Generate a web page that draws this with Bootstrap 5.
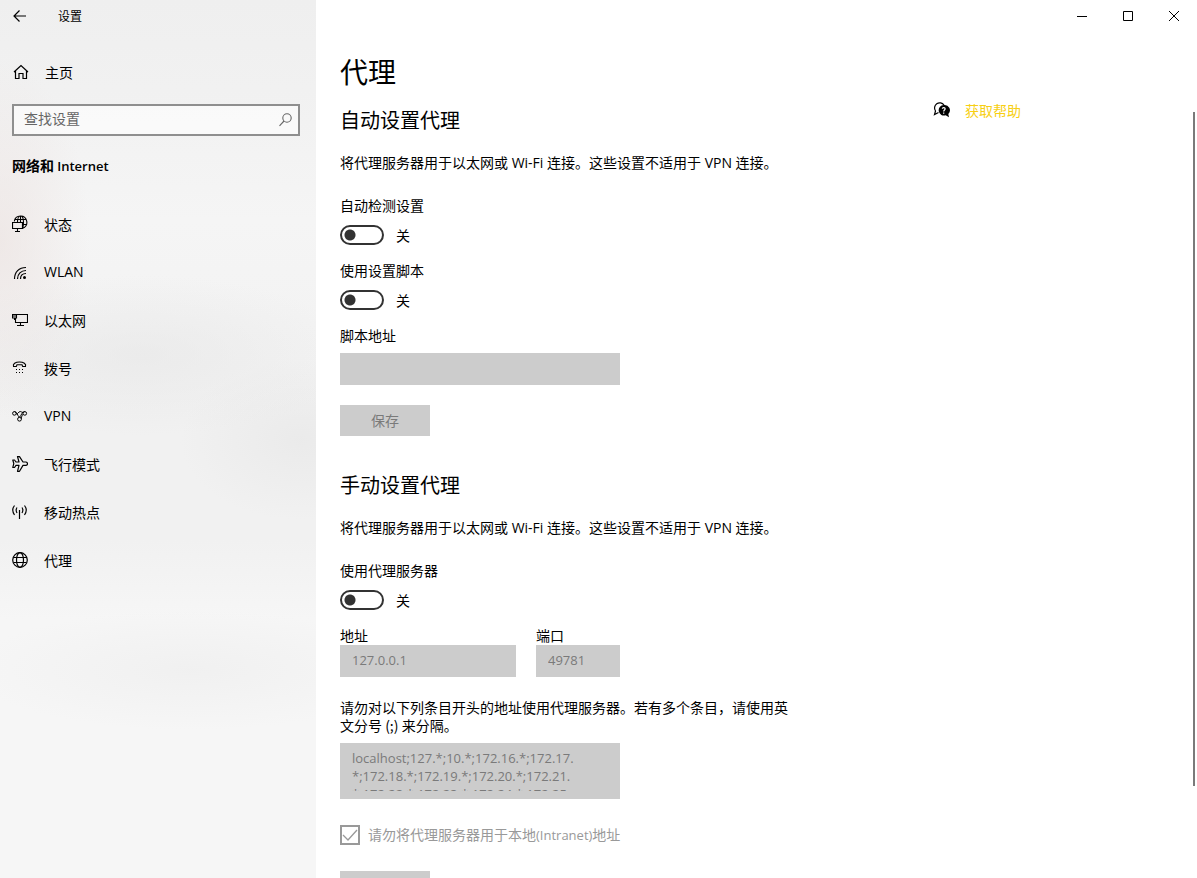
<!DOCTYPE html>
<html lang="zh-CN">
<head>
<meta charset="utf-8">
<meta name="viewport" content="width=device-width, initial-scale=1">
<title>设置</title>
<link href="https://cdn.jsdelivr.net/npm/bootstrap@5.3.0/dist/css/bootstrap.min.css" rel="stylesheet">
<style>
  body { font-family: "Noto Sans CJK SC", sans-serif; font-size: 14px; line-height: 20px; color: #000; background: #fff; }
  .latin { font-family: "Open Sans", "Noto Sans CJK SC", sans-serif; }
  span.latin { line-height: 1; }
  svg { display: block; flex: none; fill: none; stroke: currentColor; }

  /* sidebar */
  .side {
    flex: 0 0 316px;
    background:
      radial-gradient(ellipse 90px 180px at 0 240px, rgba(236,227,225,.7), transparent),
      radial-gradient(ellipse 220px 80px at 140px 355px, rgba(230,230,230,.6), transparent),
      radial-gradient(ellipse 120px 80px at 300px 440px, rgba(230,230,230,.6), transparent),
      radial-gradient(ellipse 220px 60px at 190px 670px, rgba(238,238,238,.7), transparent),
      linear-gradient(#efefef, #f1f1f1 90px, #f5f5f5 220px, #f1f1f1 420px, #f1f1f1 540px, #f6f6f6 620px, #f6f6f6);
  }
  .titlebar { height: 32px; }
  .app-name { font-size: 12px; margin-left: 18px; }
  .back { width: 40px; height: 32px; }
  .plain { border: 0; padding: 0; background: none; color: inherit; display: flex; align-items: center; justify-content: center; }
  .home-link { height: 48px; margin-top: 16px; }
  .home-link, .side-link { display: flex; align-items: center; gap: 16px; padding-left: 12px; color: #000; text-decoration: none; }
  .side-link { height: 48px; }
  .side-link:hover, .home-link:hover { background: rgba(0,0,0,.06); }
  .search { margin: 8px 16px 0 12px; padding-right: 6px; height: 32px; border: 2px solid #8f8f8f; background: rgba(255,255,255,.6); }
  .search input { background: none; border: 0; padding: 0 0 4px 10px; outline: 0; min-width: 0; }
  .search input::placeholder { color: #666; }
  .search svg { color: #666; }
  .group-name { font-size: 14px; line-height: 20px; font-weight: 700; margin: 19px 0 25px 12px; }
  .group-name .latin { font-weight: 600; font-size: 13px; }

  /* main pane */
  .pane { min-width: 0; }
  .caption-btn { width: 46px; height: 32px; }
  .page-name { font-size: 28px; line-height: 40px; font-weight: 400; margin: 19px 0 9px; }
  .scroller { overflow-y: auto; min-height: 0; scrollbar-width: none; }
  .scroller::-webkit-scrollbar { display: none; }
  .settings { flex: 0 1 593px; padding-top: 6px; }
  .section-name { font-size: 20px; line-height: 28px; font-weight: 400; margin-bottom: 18px; }
  .manual { padding-top: 35px; }
  .intro { margin-bottom: 23px; }
  .field-name { display: block; }
  .switch { display: flex; align-items: center; gap: 12px; margin: 10px 0 15px; height: 20px; }
  .switch .form-check-input {
    width: 44px; height: 20px; margin: 0; border: 2px solid #333; border-radius: 10px; box-shadow: none;
    background: radial-gradient(circle at 8px 8px, #333 5px, transparent 6px) #fff;
  }
  .switch .form-check-input:checked { background: radial-gradient(circle at 32px 8px, #333 5px, transparent 6px) #fff; }
  .box, .box:disabled { height: 32px; border: 0; border-radius: 0; background: #ccc; color: #7a7a7a; padding: 0 12px 2px; font-size: 13px; line-height: 18px; opacity: 1; }
  .w-full { width: 280px; }
  .w-addr { width: 176px; }
  .w-port { width: 84px; }
  .pair { gap: 20px; }
  .flat, .flat:disabled { width: 90px; height: 31px; margin-top: 20px; border: 0; border-radius: 0; background: #ccc; color: #7a7a7a; opacity: 1; padding: 0 0 2px; font-size: 14px; line-height: 20px; }
  .note { max-width: 452px; line-height: 18px; margin: 21px 0 9px; }
  textarea.box, textarea.box:disabled { display: block; height: 56px; min-height: 0; padding: 6px 12px 0; border-bottom: 8px solid #ccc; resize: none; white-space: pre; overflow: hidden; }
  .tick { display: flex; align-items: center; gap: 8px; margin-top: 26px; height: 20px; color: #999; }
  .tick label { padding-bottom: 2px; }
  .tick .latin { font-size: 13px; }
  .tick + .flat { margin-top: 26px; }
  .tick .form-check-input:disabled {
    width: 20px; height: 20px; margin: 0; border: 2px solid #999; border-radius: 0; opacity: 1; background-color: #fff;
    background-size: 16px 16px;
    background-image: url("data:image/svg+xml,%3Csvg xmlns='http://www.w3.org/2000/svg' viewBox='0 0 16 16'%3E%3Cpath d='M1 8l5 5 9-10' fill='none' stroke='%23999' stroke-width='1.3'/%3E%3C/svg%3E");
  }
  .help { height: 20px; gap: 15px; }
  .help a { color: #f7cf12; text-decoration: none; }
  .thumb { position: absolute; right: 2px; top: 12.8%; height: 76.7%; width: 2px; background: #7a7a7a; }
</style>
</head>
<body>
<div class="d-flex vh-100 overflow-hidden">

  <aside class="side">
    <div class="titlebar d-flex align-items-center">
      <button class="plain back" type="button" aria-label="返回">
        <svg width="14" height="14" viewBox="0 0 14 14" stroke-width="1.2"><path d="M1 7h12M6.500 1.500L1 7l5.500 5.500"/></svg>
      </button>
      <span class="app-name">设置</span>
    </div>

    <a class="home-link" href="#">
      <svg width="17" height="16" viewBox="0 0 17 16" stroke-width="1.2"><path d="M2 8L9 1.500 16 8M3.500 7v7.500h3.500V9.500h4v5h3.500V7"/></svg>
      <span>主页</span>
    </a>

    <div class="search d-flex align-items-center">
      <input class="flex-grow-1" type="search" placeholder="查找设置" aria-label="查找设置">
      <svg width="13" height="14" viewBox="0 0 13 14" stroke-width="1.100" aria-hidden="true"><circle cx="8" cy="5" r="4.200"/><path d="M5 8L.500 12.800"/></svg>
    </div>

    <h1 class="group-name">网络和 <span class="latin">Internet</span></h1>

    <nav>
      <a class="side-link" href="#">
        <svg width="16" height="18" viewBox="0 0 16 18" stroke-width="1.100"><path d="M2.300 6.300A6.300 6.300 0 1 1 10.700 13.200M5.500 7C5.500 3.500 6.800 1 8.500 1s3 2.500 3 6.300c0 2.500-.3 4.500-1 5.700M8.500 1v6M3 4.500h11M11 9.500h3.500"/><path d="M.500 7.500h10v6H.5z" stroke-width="1.200"/><path d="M5.500 13.500v3M3 16.500h5"/></svg>
        <span>状态</span></a>
      <a class="side-link" href="#">
        <svg width="16" height="16" viewBox="0 0 16 16" stroke-width="1.200"><path d="M2.500 15C2.500 8 7 3.500 14 3.500M5.500 15c0-5 3.500-8.500 8.500-8.500M8.500 15c0-3.500 2-5.500 5.500-5.500"/><circle cx="12.500" cy="13.500" r="1.500" fill="currentColor" stroke="none"/></svg>
        <span class="latin">WLAN</span></a>
      <a class="side-link" href="#">
        <svg width="16" height="16" viewBox="0 0 16 16" stroke-width="1.100"><path d="M4.500 2.500h11v8h-12V6M8.500 10.500v3M5 13.500h7M.500 2.500h4v3.500h-4zM.5 4h4M2.500 6v1.500h1"/></svg>
        <span>以太网</span></a>
      <a class="side-link" href="#">
        <svg width="16" height="16" viewBox="0 0 16 16" stroke-width="1.100"><path d="M1.500 6.500C.5 4 3.500 2 7.500 2s7 2 6 4.500H10.700L10 4.800H5L4.300 6.500z"/><path d="M4 9h1v1H4zM7 9h1v1H7zM10 9h1v1h-1zM4 12h1v1H4zM7 12h1v1H7zM10 12h1v1h-1z" stroke="none" fill="currentColor"/></svg>
        <span>拨号</span></a>
      <a class="side-link" href="#">
        <svg width="16" height="16" viewBox="0 0 16 16" stroke-width="1"><circle cx="2.400" cy="5.400" r="1.800"/><circle cx="12.800" cy="5.400" r="1.800"/><circle cx="7.500" cy="11.200" r="1.900"/><path d="M2.400 3.600c2.600 0 2.800 4 5.100 5.700M4.200 5.900C6 6.500 6.300 3.500 8.300 3.500c1.200 0 1.500 1 2.700 1M12.800 3.600c-2.800 0-3.300 3.500-5.300 5.700M11 6.200c-1 1.500-1.500 2-1.600 4.500"/></svg>
        <span class="latin">VPN</span></a>
      <a class="side-link" href="#">
        <svg width="16" height="16" viewBox="0 0 16 16" stroke-width="1.200" stroke-linejoin="round"><path d="M5.500.600h2L11 6h3q1.500.3 1.500 1.700T14 9.400h-3L7.500 15.300h-2L7 9.400H4L2.500 11.500H.800L1.800 7.700.8 4H2.500L4 6h3z"/></svg>
        <span>飞行模式</span></a>
      <a class="side-link" href="#">
        <svg width="16" height="16" viewBox="0 0 16 16" stroke-width="1.200"><path d="M7.500 6v9M5 3.500Q3.300 6 5 9M10 3.500Q11.700 6 10 9M2.500 1.500Q-1 6 2.500 11M12.500 1.500Q16 6 12.500 11"/></svg>
        <span>移动热点</span></a>
      <a class="side-link" href="#">
        <svg width="16" height="16" viewBox="0 0 16 16" stroke-width="1.200"><circle cx="8" cy="8" r="7.300"/><ellipse cx="8" cy="8" rx="3.500" ry="7.300"/><path d="M1.500 5.500h13M1.500 10.500h13"/></svg>
        <span>代理</span></a>
    </nav>
  </aside>

  <main class="pane flex-grow-1 d-flex flex-column position-relative">
    <div class="titlebar d-flex justify-content-end flex-shrink-0">
      <button class="plain caption-btn" type="button" aria-label="最小化"><svg width="10" height="10" viewBox="0 0 10 10"><path d="M0 5.500h10"/></svg></button>
      <button class="plain caption-btn" type="button" aria-label="最大化"><svg width="10" height="10" viewBox="0 0 10 10"><path d="M.500.500h9v9h-9z"/></svg></button>
      <button class="plain caption-btn" type="button" aria-label="关闭"><svg width="10" height="10" viewBox="0 0 10 10"><path d="M0 0l10 10M10 0L0 10"/></svg></button>
    </div>

    <h2 class="page-name ps-4">代理</h2>

    <div class="scroller flex-grow-1 d-flex ps-4">
      <div class="settings">
        <section>
          <h3 class="section-name">自动设置代理</h3>
          <p class="intro">将代理服务器用于以太网或<span class="latin"> Wi-Fi </span>连接。这些设置不适用于<span class="latin"> VPN </span>连接。</p>

          <label class="field-name" for="detect">自动检测设置</label>
          <div class="switch"><input class="form-check-input" type="checkbox" role="switch" id="detect"><span>关</span></div>

          <label class="field-name" for="script">使用设置脚本</label>
          <div class="switch"><input class="form-check-input" type="checkbox" role="switch" id="script"><span>关</span></div>

          <label class="field-name" for="script-url">脚本地址</label>
          <input class="form-control box latin w-full mt-2" type="text" id="script-url" disabled>
          <button class="btn flat d-block" type="button" disabled>保存</button>
        </section>

        <section class="manual">
          <h3 class="section-name">手动设置代理</h3>
          <p class="intro">将代理服务器用于以太网或<span class="latin"> Wi-Fi </span>连接。这些设置不适用于<span class="latin"> VPN </span>连接。</p>

          <label class="field-name" for="proxy">使用代理服务器</label>
          <div class="switch"><input class="form-check-input" type="checkbox" role="switch" id="proxy"><span>关</span></div>

          <div class="pair d-flex">
            <div><label class="field-name" for="addr">地址</label><input class="form-control box latin w-addr" type="text" id="addr" value="127.0.0.1" disabled></div>
            <div><label class="field-name" for="port">端口</label><input class="form-control box latin w-port" type="text" id="port" value="49781" disabled></div>
          </div>

          <label class="note d-block" for="bypass">请勿对以下列条目开头的地址使用代理服务器。若有多个条目，请使用英文分号 (;) 来分隔。</label>
          <textarea class="form-control box latin w-full" id="bypass" disabled>localhost;127.*;10.*;172.16.*;172.17.
*;172.18.*;172.19.*;172.20.*;172.21.
*;172.22.*;172.23.*;172.24.*;172.25.</textarea>

          <div class="tick">
            <input class="form-check-input" type="checkbox" id="local" checked disabled>
            <label for="local">请勿将代理服务器用于本地<span class="latin">(Intranet)</span>地址</label>
          </div>
          <button class="btn flat d-block" type="button" disabled>保存</button>
        </section>
      </div>

      <div class="help d-flex align-items-center">
        <svg width="17" height="18" viewBox="0 0 17 18" stroke-width="1.200"><path d="M5.500 11.500L1.500 13.500l1-3.500A5.200 5.200 0 1 1 11 4"/><path d="M10.700 4a5.300 5.300 0 1 0 2 10.300l3.300 2-.7-3.300A5.300 5.300 0 0 0 10.700 4z" fill="currentColor" stroke="none"/><path d="M9.300 7.800c.2-1.800 3-1.500 2.800.2-.1 1-1.400 1.200-1.400 2.500M10.700 11.500v1.300" stroke="#fff"/></svg>
        <a href="#">获取帮助</a>
      </div>
    </div>
    <div class="thumb"></div>
  </main>
</div>
<script src="https://cdn.jsdelivr.net/npm/bootstrap@5.3.0/dist/js/bootstrap.bundle.min.js"></script>
</body>
</html>
